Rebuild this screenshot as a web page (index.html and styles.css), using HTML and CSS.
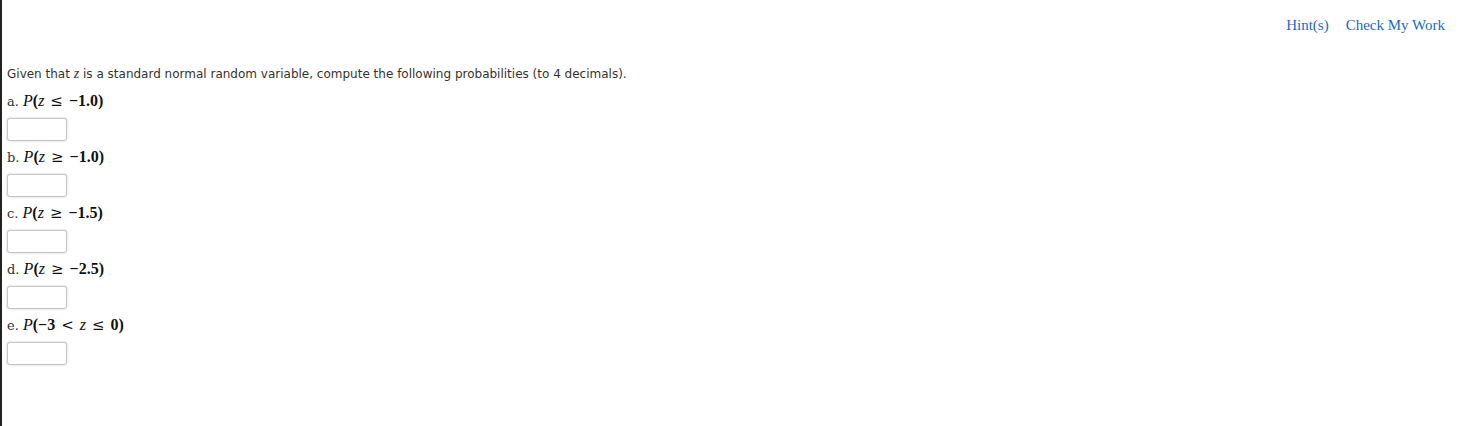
FILE: index.html
```html
<!DOCTYPE html>
<html lang="en">
<head>
    <meta charset="UTF-8">
    <title>Question</title>
    <link rel="stylesheet" href="styles.css">
</head>
<body>
    <div class="page">
        <div class="toolbar">
            <a href="#" class="tool-link">Hint(s)</a>
            <a href="#" class="tool-link">Check My Work</a>
        </div>

        <p class="question">Given that <i class="var">z</i> is a standard normal random variable, compute the following probabilities (to 4 decimals).</p>

        <div class="part">
            <div class="part-label">a. <span class="math"><i>P</i>(<i>z</i> <span class="rel">&le;</span> &minus;1.0)</span></div>
            <input type="text" class="answer">
        </div>
        <div class="part">
            <div class="part-label">b. <span class="math"><i>P</i>(<i>z</i> <span class="rel">&ge;</span> &minus;1.0)</span></div>
            <input type="text" class="answer">
        </div>
        <div class="part">
            <div class="part-label">c. <span class="math"><i>P</i>(<i>z</i> <span class="rel">&ge;</span> &minus;1.5)</span></div>
            <input type="text" class="answer">
        </div>
        <div class="part">
            <div class="part-label">d. <span class="math"><i>P</i>(<i>z</i> <span class="rel">&ge;</span> &minus;2.5)</span></div>
            <input type="text" class="answer">
        </div>
        <div class="part">
            <div class="part-label">e. <span class="math"><i>P</i>(&minus;3 <span class="rel">&lt;</span> <i>z</i> <span class="rel">&le;</span> 0)</span></div>
            <input type="text" class="answer">
        </div>
    </div>
</body>
</html>
```

FILE: styles.css
```css
body {
    margin: 0;
    padding: 0;
    background: #fff;
}
.page {
    min-height: 426px;
    box-sizing: border-box;
    border-left: 2px solid #222;
    padding: 0 0 0 5px;
}
.toolbar {
    display: flex;
    justify-content: flex-end;
    gap: 17px;
    padding: 17px 14px 0 0;
    height: 24px;
}
.tool-link {
    font-family: "Liberation Serif", serif;
    font-size: 15px;
    color: #1b6ac9;
    text-decoration: none;
}
.question {
    font-family: Verdana, "DejaVu Sans", sans-serif;
    font-size: 12px;
    color: #333;
    margin: 25px 0 0 0;
    line-height: 16px;
}
.var {
    font-family: "Liberation Serif", serif;
    font-style: italic;
    font-size: 14px;
}
.part {
    margin-top: 9px;
}
.part + .part {
    margin-top: 6px;
}
.part-label {
    font-family: "DejaVu Serif", serif;
    font-size: 13px;
    color: #333;
    line-height: 20px;
}
.math {
    font-family: "Liberation Serif", serif;
    font-size: 16px;
    font-weight: bold;
    color: #111;
}
.math i {
    font-weight: normal;
    font-style: italic;
}
.math .rel {
    font-family: "DejaVu Serif", serif;
    font-weight: normal;
    font-size: 15px;
    padding: 0 2px;
}
.answer {
    display: block;
    margin-top: 6px;
    width: 60px;
    height: 23px;
    box-sizing: border-box;
    border: 1px solid #c8c8c8;
    border-radius: 3px;
    box-shadow: 0 0 2px rgba(0, 0, 0, 0.25);
    padding: 2px 4px;
}
```
